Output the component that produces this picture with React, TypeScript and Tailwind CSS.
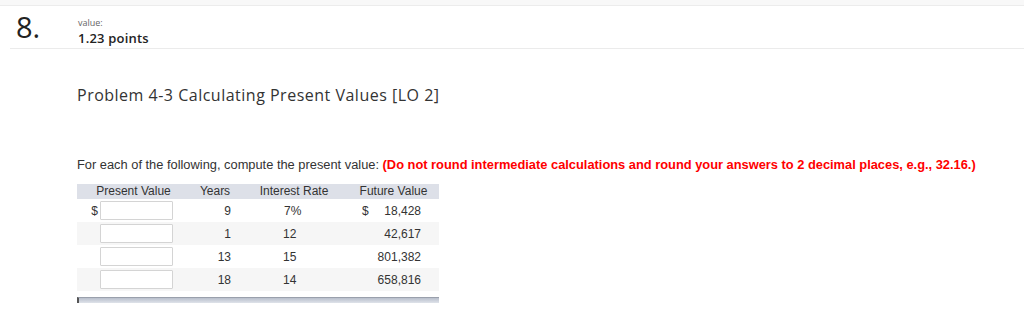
import React from "react";

const rows = [
  { dollar: true, years: "9", rate: "7%", fv: "18,428", fvDollar: true, shaded: false },
  { dollar: false, years: "1", rate: "12", fv: "42,617", fvDollar: false, shaded: true },
  { dollar: false, years: "13", rate: "15", fv: "801,382", fvDollar: false, shaded: false },
  { dollar: false, years: "18", rate: "14", fv: "658,816", fvDollar: false, shaded: true },
];

const sans = { fontFamily: '"Open Sans", "Noto Sans", sans-serif' };
const arial = { fontFamily: '"Liberation Sans", Arial, sans-serif' };

export default function App() {
  return (
    <div className="w-[1024px] h-[321px] bg-white overflow-hidden text-[#333]">
      {/* top strip */}
      <div className="h-[6px] bg-[#f8f8f8] border-b border-[#ececec]" />

      {/* question header */}
      <div className="ml-[10px] h-[43px] border-b border-[#ebebeb] flex items-start">
        <div className="w-[68px] pl-[6px] pt-[7px] text-[29px] leading-[28px] font-normal text-[#222]" style={sans}>
          8.
        </div>
        <div className="pt-[11px] flex flex-col" style={sans}>
          <span className="text-[9px] leading-[12px] text-[#666]">value:</span>
          <span className="text-[13px] leading-[18px] font-semibold text-[#222] tracking-[0.2px]">1.23 points</span>
        </div>
      </div>

      <div className="pl-[77px]">
        <h1 className="pt-[36px] text-[16px] leading-[20px] font-normal text-[#333] tracking-[0.5px]" style={sans}>
          Problem 4-3 Calculating Present Values [LO 2]
        </h1>

        <p className="mt-[52px] text-[12.85px] leading-[16px] text-[#333]" style={arial}>
          For each of the following, compute the present value:{" "}
          <span className="font-bold text-[#ff0000]">
            (Do not round intermediate calculations and round your answers to 2 decimal places, e.g., 32.16.)
          </span>
        </p>

        <div className="mt-[11px] w-[362px] text-[12px] text-[#333]" style={arial}>
          <div className="flex h-[15px] items-center bg-[#dde0e8] leading-[15px]">
            <div className="w-[113px] text-center">Present Value</div>
            <div className="w-[50px] text-center">Years</div>
            <div className="w-[108px] text-center">Interest Rate</div>
            <div className="w-[91px] text-center">Future Value</div>
          </div>
          {rows.map((r, i) => (
            <div key={i} className={`flex h-[23px] items-center ${r.shaded ? "bg-[#f6f6f6]" : "bg-white"}`}>
              <div className="w-[113px] flex items-center">
                <span className="w-[23px] pr-[2px] text-right">{r.dollar ? "$" : ""}</span>
                <div className="w-[73px] h-[19px] bg-white border border-[#d4d4d4] rounded-[1px]" />
              </div>
              <div className="w-[50px] text-right pr-[9px]">{r.years}</div>
              <div className={`w-[108px] ${r.rate === "7%" ? "pl-[44px]" : "pl-[43px]"}`}>{r.rate}</div>
              <div className="w-[91px] flex justify-between pl-[14px] pr-[18px]">
                <span>{r.fvDollar ? "$" : ""}</span>
                <span>{r.fv}</span>
              </div>
            </div>
          ))}
          <div className="mt-[6px] h-[6px] border-l-2 border-[#555] border-t border-t-[#9aa0ac] bg-gradient-to-b from-[#b9bfcc] to-[#dfe3ea]" />
        </div>
      </div>
    </div>
  );
}
